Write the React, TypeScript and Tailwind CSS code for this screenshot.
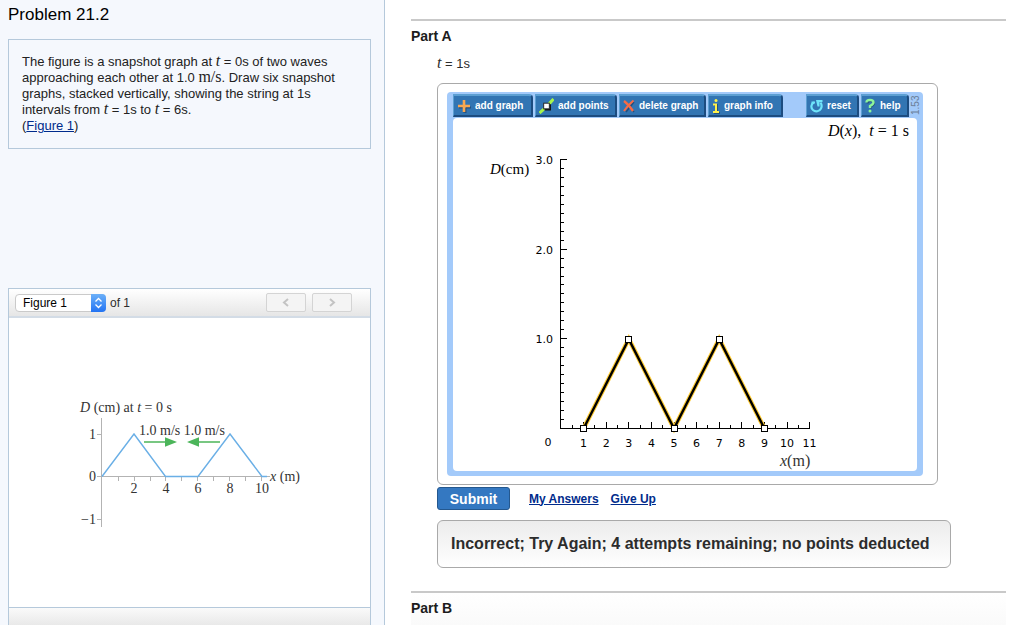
import React from "react";

const serif = "'Liberation Serif', 'Times New Roman', serif";
const verdana = "'DejaVu Sans', Verdana, sans-serif";

function Var({ children }: { children: React.ReactNode }) {
  return <i className="font-['Liberation_Serif',serif] text-base leading-3">{children}</i>;
}

function WaveFigure() {
  return (
    <svg width="235" height="135" viewBox="72 395 235 135" role="img" aria-label="Two waves at t = 0 s" fontFamily={serif} fontSize="14" fill="#333">
      <g stroke="#b3b3b3" strokeWidth="1" fill="none">
        <path d="M101.5 418V527M97 434.5h4M97 476.5H270M97 519.5h4" />
        <path d="M118.5 477v4M134.5 477v4M150.5 477v4M165.5 477v4M181.5 477v4M197.5 477v4M213.5 477v4M229.5 477v4M245.5 477v4M261.5 477v4" />
      </g>
      <polyline points="102,476.5 134,434 165.5,476.5 198,476.5 230,434 262,476.5 267,476.5" fill="none" stroke="#6aafe6" strokeWidth="1.4" />
      <text x="80" y="412"><tspan fontStyle="italic">D</tspan> (cm) at <tspan fontStyle="italic">t</tspan> = 0 s</text>
      <text x="139" y="434.5">1.0 m/s 1.0 m/s</text>
      <g fill="#4cb55a">
        <path d="M144 441.3h21v-4l12 4.7l-12 4.7v-4h-21z" />
        <path d="M220 441.3h-21v-4l-12 4.7l12 4.7v-4h21z" />
      </g>
      <text x="96" y="439" textAnchor="end">1</text>
      <text x="96" y="481" textAnchor="end">0</text>
      <text x="96" y="524" textAnchor="end">−1</text>
      {[2, 4, 6, 8, 10].map((n) => (
        <text key={n} x={102 + n * 16} y="493" textAnchor="middle">{n}</text>
      ))}
      <text x="270" y="480.5"><tspan fontStyle="italic">x</tspan> (m)</text>
    </svg>
  );
}

function Plot() {
  const px = (n: number) => 561 + n * 22.6;
  const py = (n: number) => 428.5 - n * 89.4;
  const nodes = [[1, 0], [3, 1], [5, 0], [7, 1], [9, 0]];
  const points = nodes.map(([a, b]) => `${px(a)},${py(b)}`).join(" ");
  return (
    <svg className="mx-auto block" width="464" height="353" viewBox="453 118 464 353" role="img" aria-label="Graph of D(x) at t = 1 s" fontFamily={verdana} fontSize="11">
      <text x="909" y="136" textAnchor="end" fontFamily={serif} fontSize="16">
        <tspan fontStyle="italic">D</tspan>(<tspan fontStyle="italic">x</tspan>),&#160; <tspan fontStyle="italic">t</tspan> = 1 s
      </text>
      <text x="490" y="174" fontFamily={serif} fontSize="15"><tspan fontStyle="italic">D</tspan>(cm)</text>
      <text x="780" y="466" fontFamily={serif} fontSize="16" fill="#333"><tspan fontStyle="italic">x</tspan>(m)</text>
      <g stroke="#000" strokeWidth="1" shapeRendering="crispEdges">
        <path d="M560.5 160V429M560 428.5H810" />
        {Array.from({ length: 31 }, (_, i) => (
          <line key={i} x1="560" x2={i % 10 ? 564 : 567} y1={Math.round(py(i / 10)) - 0.5} y2={Math.round(py(i / 10)) - 0.5} />
        ))}
        {Array.from({ length: 22 }, (_, i) => {
          const x = Math.floor(px((i + 1) / 2)) + 0.5;
          return <line key={i} x1={x} x2={x} y1={i % 2 ? 422 : 425} y2="428" />;
        })}
      </g>
      <polyline points={points} fill="none" stroke="#ffcc33" strokeWidth="4.5" />
      <polyline points={points} fill="none" stroke="#000" strokeWidth="2.4" />
      {nodes.map(([a, b]) => (
        <rect key={a} x={Math.floor(px(a)) - 2.5} y={Math.floor(py(b)) - 2.5} width="6" height="6" fill="#fff" stroke="#000" />
      ))}
      <text x="553" y="164" textAnchor="end">3.0</text>
      <text x="553" y="254" textAnchor="end">2.0</text>
      <text x="553" y="343" textAnchor="end">1.0</text>
      <text x="548" y="446" textAnchor="middle">0</text>
      {Array.from({ length: 11 }, (_, i) => (
        <text key={i} x={px(i + 1)} y="447" textAnchor="middle">{i + 1}</text>
      ))}
    </svg>
  );
}

function Tool({ width, icon, children }: { width: string; icon: React.ReactNode; children: React.ReactNode }) {
  return (
    <button className={`${width} flex h-[23px] shrink-0 items-center gap-1 whitespace-nowrap rounded-tr-[4px] border-t-2 border-r-2 border-b-2 border-l border-t-[#5c9fd2] border-r-[#1c4c80] border-b-[#1c4c80] border-l-[#5c9fd2] bg-[#3275b3] pl-[3px] text-[10px] leading-3 font-bold text-white`}>
      {icon}
      <span>{children}</span>
    </button>
  );
}

const plusIcon = (
  <svg width="14" height="14" viewBox="0 0 14 14" className="shrink-0">
    <path d="M2 8.500h5v5M9 8.500h5M8.500 9v5" stroke="#24507e" strokeWidth="2" fill="none" />
    <path d="M7 1v12M1 7h12" stroke="#f9a850" strokeWidth="2.6" />
  </svg>
);
const pointsIcon = (
  <svg width="15" height="16" viewBox="0 0 16 16" className="shrink-0">
    <path d="M0.500 15.500L6 10.500M10.500 6L15.500 0.500" stroke="#a6f54c" strokeWidth="3.2" />
    <path d="M12 6v6H6" stroke="#111" strokeWidth="1.500" fill="none" />
    <rect x="5" y="5" width="6" height="6" fill="#fff" stroke="#222" />
  </svg>
);
const crossIcon = (
  <svg width="12" height="14" viewBox="0 0 12 14" className="shrink-0">
    <path d="M3 3l8 10M11 3L3 13" stroke="#24507e" strokeWidth="1.5" />
    <path d="M1 2Q5 5 10 12" stroke="#f76b45" strokeWidth="2.4" fill="none" />
    <path d="M10.500 1.500Q5 6 1 12" stroke="#f76b45" strokeWidth="2" fill="none" />
  </svg>
);
const infoIcon = (
  <svg width="8" height="16" viewBox="0 0 8 16" className="shrink-0">
    <path d="M2 7h3v7M2 15h6" stroke="#24507e" strokeWidth="2" fill="none" />
    <path d="M1 6.500h3v7M1 14h6" stroke="#fff24a" strokeWidth="2" fill="none" />
    <circle cx="4" cy="2.500" r="1.500" fill="#fff24a" />
  </svg>
);
const resetIcon = (
  <svg width="13" height="14" viewBox="0 0 13 14" className="shrink-0">
    <path d="M4 3.500C1 4.500 0.500 9 3 11C5.500 13.300 9.500 12.500 11 9.500C12 7.500 11.500 5 10.500 3.500" stroke="#6fe4fa" strokeWidth="2.2" fill="none" />
    <path d="M6 1H12.500V3H9.500V7.500H7.500Z" fill="#6fe4fa" />
    <path d="M1.500 3.500H5" stroke="#6fe4fa" strokeWidth="2" />
  </svg>
);
const helpIcon = (
  <svg width="11" height="15" viewBox="0 0 11 15" className="shrink-0">
    <path d="M2.500 5.500Q2.500 3 5.500 3Q9.500 3 9 6Q8.500 7.500 6 8.500V10.500" stroke="#24507e" strokeWidth="2" fill="none" />
    <path d="M1.500 4.500Q1.500 2 5 2Q8.500 2 8.500 4.500Q8.500 6 5 8V10" stroke="#8df59a" strokeWidth="2.400" fill="none" />
    <circle cx="5" cy="13" r="1.500" fill="#8df59a" />
  </svg>
);

const navButton = "flex h-[19px] w-10 items-center justify-center rounded-xs border border-[#d4d4d4] bg-[#f4f4f4] text-[#c3c3c3]";
const link = "text-[#002b8c] underline";

export default function App() {
  return (
    <div className="flex h-screen min-h-[620px] overflow-hidden bg-white font-['Liberation_Sans',Arial,sans-serif] text-[13px] text-[#2c2c2c]">
      <aside className="flex w-[385px] shrink-0 flex-col border-r border-[#b5c9db] bg-[#f5f8fd] pr-[13px] pl-2">
        <h1 className="pt-[5px] text-[17px] leading-5 text-black">Problem 21.2</h1>
        <section className="mt-[14px] border border-[#b5c9db] pt-[14px] pr-5 pb-[14px] pl-[13px] leading-4 text-[#222]">
          <p>
            The figure is a snapshot graph at <Var>t</Var> = 0s of two waves approaching each other at 1.0{" "}
            <span className="font-['Liberation_Serif',serif] text-base leading-3">m/s</span>. Draw six snapshot graphs, stacked vertically, showing the string at 1s intervals from <Var>t</Var> = 1s to <Var>t</Var> = 6s.
          </p>
          <p>(<a href="#figure" className={link}>Figure 1</a>)</p>
        </section>
        <section id="figure" className="mt-[139px] flex flex-1 flex-col border-x border-t border-[#b5c9db]">
          <header className="flex h-[29px] shrink-0 items-center border-b-2 border-[#d3dce6] bg-linear-to-b from-white to-[#e6e6e6] pr-[18px] pl-[6px] text-xs">
            <label className="flex items-center gap-1">
              <span className="relative">
                <select aria-label="Figure" className="block h-[18px] w-[91px] appearance-none rounded-sm border border-[#cacaca] bg-white pl-[7px] text-xs leading-4 text-black">
                  <option>Figure 1</option>
                </select>
                <span className="pointer-events-none absolute inset-y-0 right-0 flex w-[15px] items-center justify-center rounded-r-sm bg-linear-to-b from-[#6cb0f8] to-[#2273f3]">
                  <svg width="9" height="12" viewBox="0 0 9 12" fill="none" stroke="#fff" strokeWidth="1.3"><path d="M1.500 4.500L4.500 1.500L7.500 4.500M1.500 7.500L4.500 10.500L7.500 7.500" /></svg>
                </span>
              </span>
              of 1
            </label>
            <div className="ml-auto flex gap-[6px]">
              <button aria-label="Previous figure" className={navButton}>
                <svg width="8" height="9" viewBox="0 0 8 9" fill="none" stroke="currentColor" strokeWidth="2"><path d="M6 1L2 4.500L6 8" /></svg>
              </button>
              <button aria-label="Next figure" className={navButton}>
                <svg width="8" height="9" viewBox="0 0 8 9" fill="none" stroke="currentColor" strokeWidth="2"><path d="M2 1L6 4.500L2 8" /></svg>
              </button>
            </div>
          </header>
          <div className="flex justify-center bg-white py-[77px]"><WaveFigure /></div>
          <footer className="flex-1 border-t border-[#b5c9db] bg-linear-to-b from-[#fafafa] to-[#e9e9e9]" />
        </section>
      </aside>

      <main className="flex min-w-0 flex-1 flex-col pt-[19px] pr-[18px] pl-[26px]">
        <section className="border-t-2 border-[#c9c9c9] pb-[23px]">
          <h2 className="pt-[7px] text-sm leading-4 font-bold text-[#1c1c1c]">Part A</h2>
          <div className="pl-[26px]">
            <p className="pt-[10px] leading-5"><Var>t</Var> = 1s</p>
            <div className="mt-[9px] w-[501px] max-w-full rounded-md border border-[#a9a9a9] px-[9px] pt-2 pb-2">
              <div className="w-[476px] rounded-[4px] bg-[#a3cafa] px-[6px] pt-[2px] pb-[5px]">
                <div className="flex items-start gap-[2px] pb-px">
                  <Tool width="w-20" icon={plusIcon}>add graph</Tool>
                  <Tool width="w-[82px]" icon={pointsIcon}>add points</Tool>
                  <Tool width="w-[87px]" icon={crossIcon}>delete graph</Tool>
                  <Tool width="w-[75px]" icon={infoIcon}>graph info</Tool>
                  <span className="w-[19px] shrink-0" />
                  <Tool width="w-[53px]" icon={resetIcon}>reset</Tool>
                  <Tool width="w-12" icon={helpIcon}>help</Tool>
                  <span className="h-[23px] w-[10px] rotate-180 text-center text-[10px] leading-[10px] text-[#6b7f99] [writing-mode:vertical-rl]">1.53</span>
                </div>
                <div className="overflow-hidden rounded-[4px] bg-white"><Plot /></div>
              </div>
            </div>
            <div className="mt-[2px] flex items-center text-xs font-bold">
              <button className="mr-[19px] h-[23px] w-[73px] rounded-[3px] border border-[#24588f] bg-[#3478c1] text-sm leading-4 font-bold text-white">Submit</button>
              <a href="#answers" className={`${link} mr-3`}>My Answers</a>
              <a href="#give-up" className={link}>Give Up</a>
            </div>
            <div className="mt-[10px] w-[514px] max-w-full rounded-md border border-[#a9a9a9] bg-linear-to-b from-[#ececec] to-white px-[13px] py-[13px] text-base leading-5 font-bold">
              Incorrect; Try Again; 4 attempts remaining; no points deducted
            </div>
          </div>
        </section>
        <section className="flex-1 border-t-2 border-[#c9c9c9] bg-linear-to-b from-white to-[#fafafa]">
          <h2 className="pt-[7px] text-sm leading-4 font-bold text-[#1c1c1c]">Part B</h2>
        </section>
      </main>
    </div>
  );
}
